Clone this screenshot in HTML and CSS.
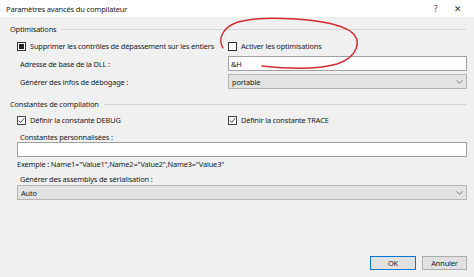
FILE: index.html
```html
<!DOCTYPE html>
<html lang="fr">
<head>
<meta charset="utf-8">
<link rel="stylesheet" href="styles.css">
</head>
<body>
<div class="window">
  <div class="titlebar">
    <span class="title">Paramètres avancés du compilateur</span>
    <span class="help">?</span>
    <span class="close">✕</span>
  </div>
  <div class="content">
    <div class="group-head"><span>Optimisations</span><i class="rule"></i></div>
    <div class="group">
      <div class="check-row">
        <div class="check"><span class="box box-square"></span><span>Supprimer les contrôles de dépassement sur les entiers</span></div>
        <div class="check"><span class="box"></span><span>Activer les optimisations</span></div>
      </div>
      <div class="field-row f1">
        <span class="label">Adresse de base de la DLL :</span>
        <div class="input">&amp;H</div>
      </div>
      <div class="field-row f2">
        <span class="label">Générer des infos de débogage :</span>
        <div class="select"><span>portable</span><svg width="7" height="4" viewBox="0 0 7 4"><path d="M0.5 0.5 L3.5 3.2 L6.5 0.5" fill="none" stroke="#6d6d6d" stroke-width="0.9"/></svg></div>
      </div>
    </div>
    <div class="group-head g2"><span>Constantes de compilation</span><i class="rule"></i></div>
    <div class="group">
      <div class="check-row c2">
        <div class="check"><span class="box box-check"><svg width="7" height="7" viewBox="0 0 7 7"><path d="M0.8 3.6 L2.7 5.5 L6.2 1.2" fill="none" stroke="#333" stroke-width="0.9"/></svg></span><span>Définir la constante DEBUG</span></div>
        <div class="check"><span class="box box-check"><svg width="7" height="7" viewBox="0 0 7 7"><path d="M0.8 3.6 L2.7 5.5 L6.2 1.2" fill="none" stroke="#333" stroke-width="0.9"/></svg></span><span>Définir la constante TRACE</span></div>
      </div>
      <div class="label l-custom">Constantes personnalisées :</div>
      <div class="input wide"></div>
      <div class="hint">Exemple : Name1="Value1",Name2="Value2",Name3="Value3"</div>
      <div class="label l-ser">Générer des assemblys de sérialisation :</div>
      <div class="select wide"><span>Auto</span><svg width="7" height="4" viewBox="0 0 7 4"><path d="M0.5 0.5 L3.5 3.2 L6.5 0.5" fill="none" stroke="#6d6d6d" stroke-width="0.9"/></svg></div>
    </div>
    <div class="buttons">
      <div class="btn btn-default">OK</div>
      <div class="btn">Annuler</div>
    </div>
  </div>
  <svg class="annotation" width="474" height="277" viewBox="0 0 474 277">
    <path d="M223 48 C218 40 221 28 238 22 C262 15 330 18 350 31 C363 40 358 57 337 64 C316 70 290 69 262 66" fill="none" stroke="#d42a33" stroke-width="1.4" stroke-linecap="round"/>
  </svg>
</div>
</body>
</html>
```
FILE: styles.css
```css
html, body {
  margin: 0;
  padding: 0;
}
body {
  width: 474px;
  height: 277px;
  overflow: hidden;
  font-family: "Noto Sans", "Open Sans", sans-serif;
  font-size: 7.4px;
  letter-spacing: -0.16px;
  color: #1a1a1a;
}
.window {
  position: relative;
  width: 474px;
  height: 277px;
  background: #f0f0f0;
  box-sizing: border-box;
}
.titlebar {
  height: 17px;
  background: #fff;
  display: flex;
  align-items: center;
  padding-left: 6px;
  box-sizing: border-box;
}
.title {
  flex: 1;
  font-size: 7.5px;
}
.help {
  width: 20px;
  font-size: 8px;
  color: #333;
}
.close {
  width: 20px;
  font-size: 9px;
  color: #333;
}
.content {
  padding: 0 7px 0 10px;
}
.group-head {
  display: flex;
  align-items: center;
  height: 12px;
  margin-top: 6px;
}
.group-head.g2 {
  margin-top: 9px;
}
.group-head span {
  padding-right: 5px;
}
.rule {
  flex: 1;
  height: 0;
  border-top: 1px solid #d5d5d5;
  margin-right: 1px;
}
.group {
  padding-left: 7px;
}
.check-row {
  display: grid;
  grid-template-columns: 211px 1fr;
  height: 12px;
  margin-top: 5px;
  align-items: center;
}
.check-row.c2 {
  margin-top: 4px;
}
.check {
  display: flex;
  align-items: center;
  gap: 4px;
}
.box {
  width: 9px;
  height: 9px;
  box-sizing: border-box;
  border: 1px solid #333;
  background: #fff;
  display: flex;
  align-items: center;
  justify-content: center;
}
.box-square::after {
  content: "";
  width: 5px;
  height: 5px;
  background: #222;
}
.box-check {
  border-color: #444;
}
.field-row {
  display: grid;
  grid-template-columns: 211px 1fr;
  align-items: center;
}
.field-row.f1 {
  margin-top: 4px;
}
.field-row.f2 {
  margin-top: 3px;
}
.label {
  padding-left: 3px;
}
.input {
  height: 15px;
  box-sizing: border-box;
  border: 1px solid #a0a0a0;
  background: #fff;
  padding-left: 2px;
  display: flex;
  align-items: center;
}
.select {
  height: 15px;
  box-sizing: border-box;
  border: 1px solid #b4b4b4;
  background: #e3e3e3;
  padding: 0 3px 0 3px;
  display: flex;
  align-items: center;
  justify-content: space-between;
}
.l-custom {
  height: 10px;
  line-height: 10px;
  margin-top: 6px;
}
.hint {
  height: 12px;
  line-height: 12px;
  margin-top: 1px;
}
.l-ser {
  height: 12px;
  line-height: 12px;
  margin-top: 3px;
}
.buttons {
  display: flex;
  justify-content: flex-end;
  gap: 6px;
  margin-top: 56px;
}
.btn {
  width: 45px;
  height: 14px;
  box-sizing: border-box;
  border: 1px solid #adadad;
  background: #e1e1e1;
  display: flex;
  align-items: center;
  justify-content: center;
}
.btn-default {
  width: 46px;
  border-color: #0078d7;
}
.annotation {
  position: absolute;
  left: 0;
  top: 0;
  pointer-events: none;
}
```
